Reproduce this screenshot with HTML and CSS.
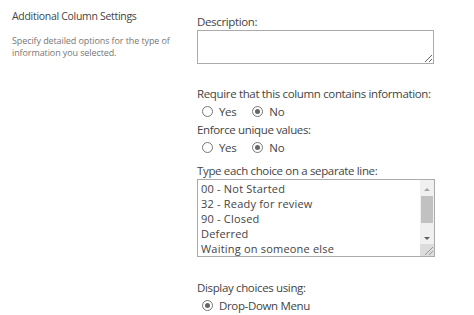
FILE: index.html
```html
<!DOCTYPE html>
<html>

<head>
    <meta charset="UTF-8">
    <title>Additional Column Settings</title>
    <link rel="stylesheet" href="styles.css">
</head>

<body>
    <div class="settings">
        <div class="side">
            <h3 class="side-title">Additional Column Settings</h3>
            <p class="side-desc">Specify detailed options for the type of information you selected.</p>
        </div>
        <div class="fields">
            <div class="label">Description:</div>
            <textarea class="desc-box"></textarea>

            <div class="label first">Require that this column contains information:</div>
            <div class="radios">
                <label class="opt"><input type="radio" name="req"> Yes</label>
                <label class="opt"><input type="radio" name="req" checked> No</label>
            </div>

            <div class="label">Enforce unique values:</div>
            <div class="radios">
                <label class="opt"><input type="radio" name="uniq"> Yes</label>
                <label class="opt"><input type="radio" name="uniq" checked> No</label>
            </div>

            <div class="label choices-label">Type each choice on a separate line:</div>
            <div class="choices">
                <div class="choice-lines">
                    <div>00 - Not Started</div>
                    <div>32 - Ready for review</div>
                    <div>90 - Closed</div>
                    <div>Deferred</div>
                    <div>Waiting on someone else</div>
                </div>
                <div class="scrollbar">
                    <div class="arrow up"></div>
                    <div class="track"><div class="thumb"></div></div>
                    <div class="arrow down"></div>
                    <div class="corner">
                        <svg width="12" height="12" viewBox="0 0 12 12">
                            <line x1="3" y1="11" x2="11" y2="3" stroke="#999" stroke-width="1"/>
                            <line x1="7" y1="11" x2="11" y2="7" stroke="#999" stroke-width="1"/>
                        </svg>
                    </div>
                </div>
            </div>

            <div class="label display-label">Display choices using:</div>
            <div class="radios">
                <label class="opt"><input type="radio" name="disp" checked> Drop-Down Menu</label>
            </div>
        </div>
    </div>
</body>

</html>
```

FILE: styles.css
```css
* {
    margin: 0;
    padding: 0;
    box-sizing: border-box;
}

body {
    background-color: #fff;
    font-family: "Open Sans", "Noto Sans", sans-serif;
    color: #444;
    overflow: hidden;
}

.settings {
    display: flex;
}

.side {
    width: 197px;
    padding: 9px 0 0 12px;
}

.side-title {
    font-size: 10.5px;
    font-weight: normal;
    line-height: 14px;
    letter-spacing: -0.3px;
    color: #444;
}

.side-desc {
    margin-top: 12px;
    width: 172px;
    font-size: 9px;
    line-height: 11.5px;
    letter-spacing: -0.1px;
    color: #777;
}

.fields {
    padding-top: 13px;
    font-size: 11.5px;
    letter-spacing: -0.35px;
}

.label {
    line-height: 17px;
    height: 17px;
    white-space: nowrap;
}

.desc-box {
    display: block;
    width: 237px;
    height: 34px;
    border: 1px solid #ababab;
    resize: both;
    font-family: inherit;
}

.label.first {
    margin-top: 21px;
}

.radios {
    display: flex;
    gap: 16px;
    height: 19px;
    align-items: center;
    padding-left: 5px;
}

.opt {
    display: flex;
    align-items: center;
    gap: 6px;
}

.opt input {
    appearance: none;
    -webkit-appearance: none;
    width: 11px;
    height: 11px;
    border: 1px solid #777;
    border-radius: 50%;
    background: #fff;
    display: flex;
    align-items: center;
    justify-content: center;
}

.opt input:checked::after {
    content: "";
    width: 5px;
    height: 5px;
    border-radius: 50%;
    background: #666;
}

.choices-label {
    margin-top: 5px;
}

.choices {
    display: flex;
    width: 238px;
    height: 78px;
    border: 1px solid #ababab;
}

.choice-lines {
    flex: 1;
    padding: 1px 0 0 3px;
    font-size: 11px;
    letter-spacing: 0.2px;
    line-height: 15px;
    color: #444;
    white-space: nowrap;
    overflow: hidden;
}

.scrollbar {
    width: 14px;
    background-color: #f0f0f0;
    display: flex;
    flex-direction: column;
}

.arrow {
    height: 12px;
    display: flex;
    align-items: center;
    justify-content: center;
}

.arrow.up {
    margin-top: 3px;
}

.arrow.up::after {
    content: "";
    border-left: 3px solid transparent;
    border-right: 3px solid transparent;
    border-bottom: 3px solid #a3a3a3;
}

.arrow.down::after {
    content: "";
    border-left: 3px solid transparent;
    border-right: 3px solid transparent;
    border-top: 3px solid #606060;
}

.track {
    height: 37px;
    padding: 1px 1px;
}

.thumb {
    height: 27px;
    background-color: #c1c1c1;
}

.corner {
    flex: 1;
    background-color: #dcdcdc;
    display: flex;
    align-items: flex-end;
    justify-content: flex-end;
}

.display-label {
    margin-top: 22px;
}
```
